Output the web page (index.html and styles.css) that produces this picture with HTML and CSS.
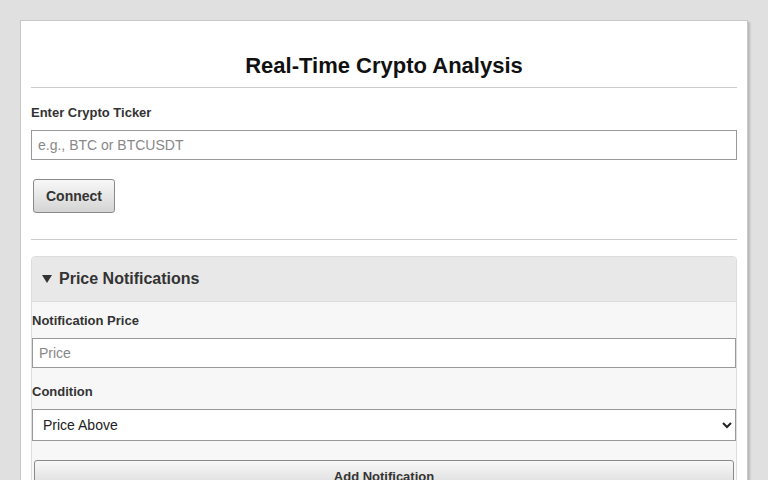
FILE: index.html
```html
<!DOCTYPE html>
<html lang="en">
<head>
<meta charset="utf-8">
<title>Real-Time Crypto Analysis</title>
<link rel="stylesheet" href="styles.css">
</head>
<body>
<div class="card">
  <h1 class="title">Real-Time Crypto Analysis</h1>
  <label class="label" for="ticker">Enter Crypto Ticker</label>
  <input class="field" id="ticker" type="text" placeholder="e.g., BTC or BTCUSDT">
  <button class="btn connect" type="button">Connect</button>
  <hr class="rule">
  <details class="panel" open>
    <summary class="panel-head"><svg class="tri" width="10" height="8" viewBox="0 0 10 8"><path d="M0 0H10L5 8Z" fill="#333"/></svg>Price Notifications</summary>
    <div class="panel-body">
      <label class="label" for="price">Notification Price</label>
      <input class="field" id="price" type="text" placeholder="Price">
      <label class="label" for="cond">Condition</label>
      <select class="field select" id="cond">
        <option>Price Above</option>
        <option>Price Below</option>
      </select>
      <button class="btn wide" type="button">Add Notification</button>
    </div>
  </details>
</div>
</body>
</html>
```

FILE: styles.css
```css
html, body {
  margin: 0;
  padding: 0;
}
body {
  background: #e0e0e0;
  font-family: "Liberation Sans", Arial, sans-serif;
  color: #333;
  padding: 20px;
}
.card {
  background: #fff;
  border: 1px solid #c8c8c8;
  box-shadow: 2px 2px 2px rgba(0, 0, 0, 0.18);
  padding: 10px;
  min-height: 600px;
}
.title {
  margin: 22px 0 17px;
  padding-bottom: 9px;
  border-bottom: 1px solid #ccc;
  font-size: 22px;
  line-height: 25px;
  text-align: center;
  color: #111;
  font-weight: bold;
}
.label {
  display: block;
  font-size: 13px;
  line-height: 16px;
  font-weight: bold;
  color: #333;
  margin-bottom: 9px;
}
.field {
  display: block;
  box-sizing: border-box;
  width: 100%;
  height: 30px;
  margin: 0;
  padding: 6px 6px;
  border: 1px solid #999;
  border-radius: 0;
  background: #fff;
  font-family: "Liberation Sans", Arial, sans-serif;
  font-size: 14px;
  color: #333;
}
.field::placeholder {
  color: #888;
}
.select {
  height: 32px;
  padding: 4px 6px;
  color: #222;
}
.btn {
  display: block;
  box-sizing: border-box;
  margin: 19px 2px 0;
  padding: 8px 12px;
  border: 1px solid #8a8a8a;
  border-radius: 3px;
  background: linear-gradient(#f8f8f8, #d4d4d4);
  font-family: "Liberation Sans", Arial, sans-serif;
  font-size: 14px;
  line-height: 16px;
  font-weight: bold;
  color: #333;
}
.rule {
  margin: 26px 0 16px;
  border: 0;
  border-top: 1px solid #ccc;
}
.panel {
  border: 1px solid #ddd;
  border-radius: 4px;
  background: #f7f7f7;
}
.panel-head {
  list-style: none;
  display: flex;
  align-items: center;
  padding: 12px 10px;
  line-height: 20px;
  background: #e8e8e8;
  border-bottom: 1px solid #ddd;
  border-radius: 4px 4px 0 0;
  font-size: 16px;
  font-weight: bold;
  color: #333;
}
.panel-head::-webkit-details-marker {
  display: none;
}
.tri {
  display: block;
  margin-right: 7px;
}
.panel-body {
  padding: 11px 0 20px;
}
.panel-body .label {
  margin-bottom: 9px;
}
.panel-body .field {
  margin-bottom: 16px;
}
.panel-body .select {
  margin-bottom: 0;
}
.wide {
  width: calc(100% - 4px);
  margin-top: 19px;
  font-size: 13px;
}
```
